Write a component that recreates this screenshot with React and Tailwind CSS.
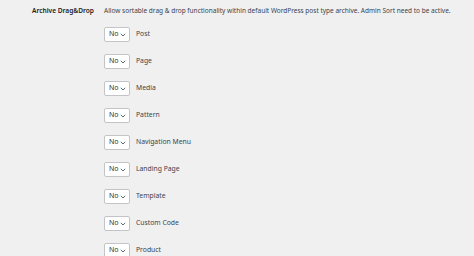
import React from 'react';

const types = [
  'Post',
  'Page',
  'Media',
  'Pattern',
  'Navigation Menu',
  'Landing Page',
  'Template',
  'Custom Code',
  'Product',
];

const Chevron = () => (
  <svg width="6" height="4" viewBox="0 0 6 4" className="text-[#50575e]">
    <path d="M0.8 0.8 L3 3 L5.2 0.8" fill="none" stroke="currentColor" strokeWidth="0.9" />
  </svg>
);

const Select = () => (
  <div className="flex items-center justify-between w-[26px] h-[15px] bg-white border border-[#c3c4c7] rounded-[2px] pl-[4px] pr-[3px] text-[7px] text-[#2c3338]">
    <span>No</span>
    <Chevron />
  </div>
);

export default function App() {
  return (
    <div
      className="w-[474px] h-[256px] overflow-hidden bg-[#f0f0f1] text-[#3c434a]"
      style={{ fontFamily: '"Noto Sans", "Open Sans", sans-serif' }}
    >
      <div className="flex pt-[4px]">
        <div className="w-[104px] pl-[32px] text-[6.6px] font-semibold text-[#1d2327] leading-[13px] whitespace-nowrap">
          Archive Drag&amp;Drop
        </div>
        <div className="flex-1">
          <p className="text-[6.5px] leading-[13px] whitespace-nowrap">
            Allow sortable drag &amp; drop functionality within default WordPress post type archive. Admin Sort need to be active.
          </p>
          <div className="flex flex-col gap-[12px] mt-[10px]">
            {types.map((t) => (
              <div key={t} className="flex items-center gap-[6px]">
                <Select />
                <span className="text-[6.8px]">{t}</span>
              </div>
            ))}
          </div>
        </div>
      </div>
    </div>
  );
}
